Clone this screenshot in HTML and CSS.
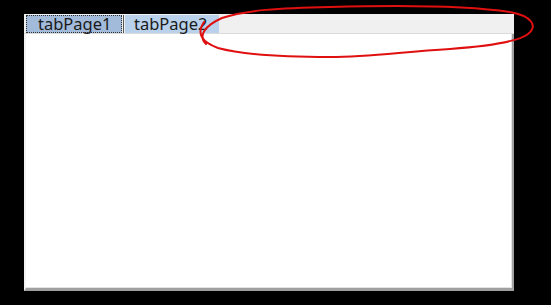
FILE: index.html
```html
<!DOCTYPE html>
<html lang="en">
<head>
  <meta charset="UTF-8" />
  <title>tabControl</title>
  <link rel="stylesheet" href="styles.css">
</head>
<body>
  <div class="tab-control">
    <div class="tab-strip">
      <div class="tab active">tabPage1</div>
      <div class="sep"></div>
      <div class="tab">tabPage2</div>
    </div>
    <div class="tab-page"></div>
  </div>

  <svg class="mark" width="551" height="305" viewBox="0 0 551 305">
    <path d="M206 44 C198 36 204 26 222 18 C245 10 280 8 330 7 C400 5 470 6 510 12 C532 16 538 26 528 34 C518 42 490 46 450 49 C400 52 370 57 330 57 C280 57 240 54 218 48 C202 42 196 34 204 22"
      fill="none" stroke="#e01010" stroke-width="2" stroke-linecap="round" />
  </svg>
</body>
</html>
```

FILE: styles.css
```css
body {
  margin: 0;
  height: 305px;
  background: #000;
  padding: 14px 0 0 24px;
  box-sizing: border-box;
  font-family: 'Noto Sans', 'Open Sans', sans-serif;
  position: relative;
  overflow: hidden;
}

.tab-control {
  width: 490px;
}

.tab-strip {
  height: 20px;
  background: #f0f0f0;
  border-bottom: 1px solid #dadada;
  display: flex;
  align-items: flex-start;
  padding: 1px 0 0 2px;
  box-sizing: border-box;
}

.tab {
  height: 18px;
  background: #b9d1ea;
  color: #1a1a1a;
  font-size: 16.5px;
  line-height: 18px;
  box-sizing: border-box;
  white-space: nowrap;
}

.tab.active {
  background: #a3bbdb;
  border: 1px dotted #333;
  width: 96px;
  padding: 0 0 0 11px;
  line-height: 16px;
}

.tab:last-child {
  width: 94px;
  padding: 0 0 0 9px;
}

.sep {
  width: 1px;
  height: 18px;
  background: #555;
  margin: 0 1px;
}

.tab-page {
  width: 490px;
  height: 257px;
  background: #fff;
  box-sizing: border-box;
  border-left: 2px solid #f2f2f2;
  border-right: 2px solid #a0a0a0;
  border-bottom: 3px solid #a0a0a0;
  box-shadow: inset -1px -1px 0 #e3e3e3;
}

.mark {
  position: absolute;
  left: 0;
  top: 0;
  pointer-events: none;
}
```
